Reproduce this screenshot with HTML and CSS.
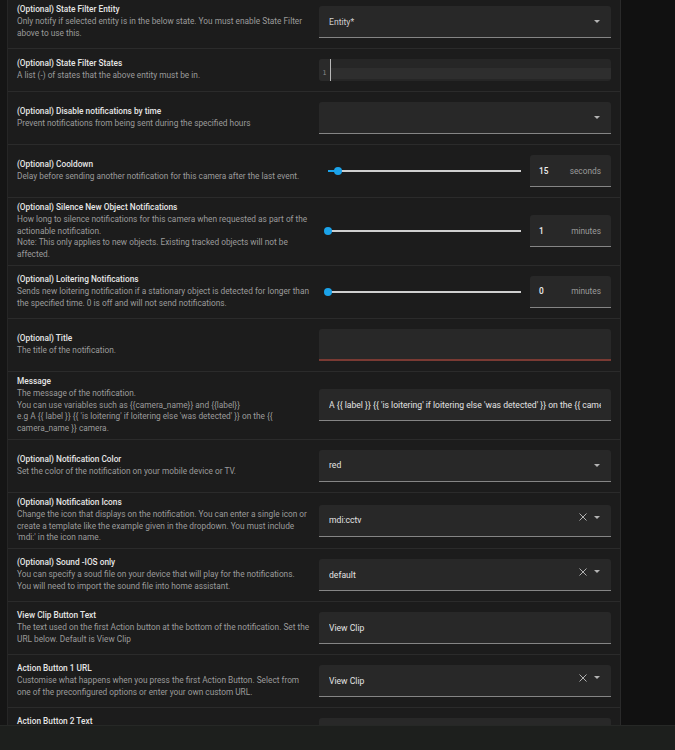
FILE: index.html
```html
<!DOCTYPE html>
<html lang="en">
<head>
  <meta charset="UTF-8">
  <title>Notification Settings</title>
  <link rel="stylesheet" href="styles.css">
</head>
<body>
  <div class="side"></div>

  <div class="panel">
    <div class="row">
      <div class="info">
        <div class="name">(Optional) State Filter Entity</div>
        <div class="desc">Only notify if selected entity is in the below state. You must enable State Filter<br>above to use this.</div>
      </div>
      <div class="field select">
        <span class="value hint">Entity*</span>
        <span class="icons"><span class="arrow"></span></span>
      </div>
    </div>

    <div class="row">
      <div class="info">
        <div class="name">(Optional) State Filter States</div>
        <div class="desc">A list (-) of states that the above entity must be in.</div>
      </div>
      <div class="code">
        <div class="gutter"><span>1</span></div>
        <div class="lines"><div class="active-line"></div></div>
      </div>
    </div>

    <div class="row">
      <div class="info">
        <div class="name">(Optional) Disable notifications by time</div>
        <div class="desc">Prevent notifications from being sent during the specified hours</div>
      </div>
      <div class="field select">
        <span class="value"></span>
        <span class="icons"><span class="arrow"></span></span>
      </div>
    </div>

    <div class="row">
      <div class="info">
        <div class="name">(Optional) Cooldown</div>
        <div class="desc">Delay before sending another notification for this camera after the last event.</div>
      </div>
      <div class="slider-field">
        <div class="slider">
          <div class="track"><div class="fill" style="width: 5%"></div><div class="thumb" style="left: 5%"></div></div>
        </div>
        <div class="field number"><span class="num">15</span><span class="unit">seconds</span></div>
      </div>
    </div>

    <div class="row">
      <div class="info">
        <div class="name">(Optional) Silence New Object Notifications</div>
        <div class="desc">How long to silence notifications for this camera when requested as part of the<br>actionable notification.<br>Note: This only applies to new objects. Existing tracked objects will not be<br>affected.</div>
      </div>
      <div class="slider-field">
        <div class="slider">
          <div class="track"><div class="thumb" style="left: 0%"></div></div>
        </div>
        <div class="field number"><span class="num">1</span><span class="unit">minutes</span></div>
      </div>
    </div>

    <div class="row">
      <div class="info">
        <div class="name">(Optional) Loitering Notifications</div>
        <div class="desc">Sends new loitering notification if a stationary object is detected for longer than<br>the specified time. 0 is off and will not send notifications.</div>
      </div>
      <div class="slider-field">
        <div class="slider">
          <div class="track"><div class="thumb" style="left: 0%"></div></div>
        </div>
        <div class="field number"><span class="num">0</span><span class="unit">minutes</span></div>
      </div>
    </div>

    <div class="row">
      <div class="info">
        <div class="name">(Optional) Title</div>
        <div class="desc">The title of the notification.</div>
      </div>
      <div class="field text invalid"><span class="value"></span></div>
    </div>

    <div class="row">
      <div class="info">
        <div class="name">Message</div>
        <div class="desc">The message of the notification.<br>You can use variables such as {{camera_name}} and {{label}}<br>e.g A {{ label }} {{ 'is loitering' if loitering else 'was detected' }} on the {{<br>camera_name }} camera.</div>
      </div>
      <div class="field text"><span class="value">A {{ label }} {{ 'is loitering' if loitering else 'was detected' }} on the {{ camera_name }} camera.</span></div>
    </div>

    <div class="row">
      <div class="info">
        <div class="name">(Optional) Notification Color</div>
        <div class="desc">Set the color of the notification on your mobile device or TV.</div>
      </div>
      <div class="field select">
        <span class="value">red</span>
        <span class="icons"><span class="arrow"></span></span>
      </div>
    </div>

    <div class="row">
      <div class="info">
        <div class="name">(Optional) Notification Icons</div>
        <div class="desc">Change the icon that displays on the notification. You can enter a single icon or<br>create a template like the example given in the dropdown. You must include<br>'mdi:' in the icon name.</div>
      </div>
      <div class="field select">
        <span class="value">mdi:cctv</span>
        <span class="icons raised">
          <svg class="clear" viewBox="0 0 8 8"><path d="M0.5 0.5L7.5 7.5M7.5 0.5L0.5 7.5"/></svg>
          <span class="arrow"></span>
        </span>
      </div>
    </div>

    <div class="row">
      <div class="info">
        <div class="name">(Optional) Sound -IOS only</div>
        <div class="desc">You can specify a soud file on your device that will play for the notifications.<br>You will need to import the sound file into home assistant.</div>
      </div>
      <div class="field select">
        <span class="value">default</span>
        <span class="icons raised">
          <svg class="clear" viewBox="0 0 8 8"><path d="M0.5 0.5L7.5 7.5M7.5 0.5L0.5 7.5"/></svg>
          <span class="arrow"></span>
        </span>
      </div>
    </div>

    <div class="row">
      <div class="info">
        <div class="name">View Clip Button Text</div>
        <div class="desc">The text used on the first Action button at the bottom of the notification. Set the<br>URL below. Default is View Clip</div>
      </div>
      <div class="field text"><span class="value">View Clip</span></div>
    </div>

    <div class="row">
      <div class="info">
        <div class="name">Action Button 1 URL</div>
        <div class="desc">Customise what happens when you press the first Action Button. Select from<br>one of the preconfigured options or enter your own custom URL.</div>
      </div>
      <div class="field select">
        <span class="value">View Clip</span>
        <span class="icons raised">
          <svg class="clear" viewBox="0 0 8 8"><path d="M0.5 0.5L7.5 7.5M7.5 0.5L0.5 7.5"/></svg>
          <span class="arrow"></span>
        </span>
      </div>
    </div>

    <div class="row">
      <div class="info">
        <div class="name">Action Button 2 Text</div>
        <div class="desc">The text used on the second Action button at the bottom of the notification. Set<br>the URL below. Default is View Snapshot</div>
      </div>
      <div class="field text"><span class="value">View Snapshot</span></div>
    </div>
  </div>

  <div class="taskbar"></div>
</body>
</html>
```

FILE: styles.css
```css
body {
  margin: 0;
  background: #111111;
  font-family: 'Roboto', 'Liberation Sans', sans-serif;
  font-size: 8.3px;
  color: #e2e2e2;
  display: flex;
  align-items: flex-start;
  height: 100vh;
  overflow: hidden;
}

.side {
  width: 7px;
  align-self: stretch;
  background: #151515;
}

.panel {
  width: 612px;
  margin-top: -4px;
  background: #1c1c1c;
  border-left: 1px solid #262626;
  border-right: 1px solid #2a2a2a;
}

.row {
  display: grid;
  grid-template-columns: 1fr 292px;
  column-gap: 9px;
  align-items: center;
  padding: 4px 9px;
  border-bottom: 1px solid #2b2b2b;
}

.info {
  line-height: 11.8px;
  min-width: 0;
}

.name {
  font-weight: 500;
  color: #e6e6e6;
}

/* line breaks are set by hand in the markup */
.desc {
  color: #9b9b9b;
  white-space: nowrap;
}

/* text / select fields */
.field {
  display: flex;
  align-items: center;
  height: 32px;
  margin: 6px 0;
  padding: 0 10px 0 10px;
  background: #282828;
  border-radius: 3px 3px 0 0;
  border-bottom: 1px solid #858585;
  box-sizing: border-box;
  overflow: hidden;
}

.field .value {
  flex: 1;
  white-space: nowrap;
  overflow: hidden;
  color: #e4e4e4;
  font-size: 8.6px;
}

.field .hint {
  color: #cfcfcf;
}

.field.invalid {
  border-bottom: 2px solid #7a3a33;
}

.icons {
  display: flex;
  align-items: center;
  gap: 7px;
  margin-right: 1px;
}

.icons.raised {
  margin-bottom: 6px;
}

.arrow {
  width: 0;
  height: 0;
  border-left: 3.5px solid transparent;
  border-right: 3.5px solid transparent;
  border-top: 3.5px solid #b4b4b4;
}

.clear {
  width: 8px;
  height: 8px;
  stroke: #b0b0b0;
  stroke-width: 1;
  fill: none;
}

/* code editor */
.code {
  display: flex;
  height: 22px;
  margin: 6px 0;
  background: #262626;
  border-radius: 3px;
  overflow: hidden;
}

.gutter {
  width: 12px;
  border-right: 1px solid #b8b8b8;
  font-family: 'DejaVu Sans Mono', monospace;
  font-size: 6.5px;
  color: #8a8a8a;
  display: flex;
  align-items: center;
  justify-content: center;
  padding-top: 6px;
  box-sizing: border-box;
  background: #2a2a2a;
}

.lines {
  flex: 1;
  padding-top: 9px;
}

.active-line {
  height: 11px;
  background: #2e2e2e;
}

/* slider + number box */
.slider-field {
  display: flex;
  align-items: center;
  gap: 9px;
}

.slider {
  flex: 1;
  padding: 0 0 0 9px;
}

.track {
  position: relative;
  height: 2px;
  background: #cfcfcf;
}

.fill {
  height: 2px;
  background: #1ba3ea;
}

.thumb {
  position: absolute;
  top: -3px;
  width: 8px;
  height: 8px;
  margin-left: -4px;
  border-radius: 50%;
  background: #1ba3ea;
}

.field.number {
  width: 81px;
  flex: none;
  padding: 0 10px 0 9px;
  justify-content: space-between;
}

.num {
  font-weight: 500;
  color: #f0f0f0;
}

.unit {
  color: #9a9a9a;
}

.taskbar {
  position: fixed;
  left: 0;
  right: 0;
  bottom: 0;
  height: 24px;
  background: #1d1f1d;
  border-top: 1px solid #262826;
}
```
